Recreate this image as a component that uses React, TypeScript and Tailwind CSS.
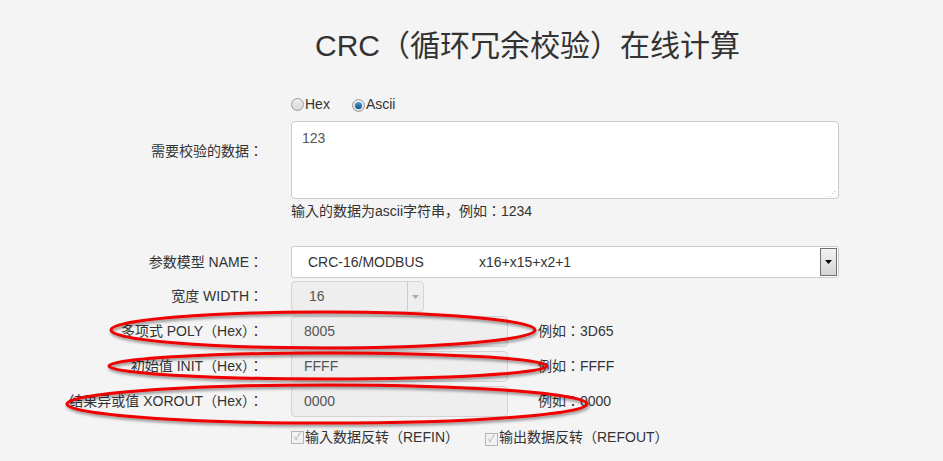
import React from 'react';

const font = { fontFamily: '"Liberation Sans", Arial, "Noto Sans CJK KR", sans-serif' };

const Label = ({ children }: { children: React.ReactNode }) => (
  <div className="w-[266px] shrink-0 pr-[3px] text-right text-[14px] text-[#333]">{children}</div>
);

const Radio = ({ checked }: { checked?: boolean }) => (
  <span className="inline-flex h-[13px] w-[13px] items-center justify-center rounded-full border border-[#9a9a9a] bg-gradient-to-b from-[#eee] to-[#d8d8d8]">
    {checked && <span className="h-[7px] w-[7px] rounded-full bg-gradient-to-b from-[#4fa3e0] to-[#0a4f8c]" />}
  </span>
);

const Check = () => (
  <span className="inline-flex h-[13px] w-[13px] items-center justify-center border border-[#b5b5b5] bg-[#f2f2f2] text-[10px] leading-none text-[#aaa]">
    ✓
  </span>
);

const HexRow = ({ label, value, example }: { label: string; value: string; example: string }) => (
  <div className="flex h-[31px] items-center">
    <Label>{label}</Label>
    <div className="ml-[25px] flex h-[31px] w-[217px] items-center rounded-[4px] border border-[#d4d4d4] bg-[#eee] pl-[12px] text-[14px] text-[#555]">
      {value}
    </div>
    <div className="ml-[30px] text-[14px] text-[#333]">{example}</div>
  </div>
);

export default function App() {
  return (
    <div className="relative h-[461px] w-[943px] overflow-hidden bg-[#f4f4f4]" style={font}>
      <h1 className="pt-[26px] pl-[315px] text-[30px] leading-[40px] text-[#333]">CRC（循环冗余校验）在线计算</h1>

      <div className="mt-[28px] flex flex-col">
        <div className="flex h-[20px] items-center pl-[291px] text-[14px] leading-[20px] text-[#333]">
          <Radio />
          <span className="ml-[1px]">Hex</span>
          <span className="ml-[22px]"><Radio checked /></span>
          <span className="ml-[1px]">Ascii</span>
        </div>

        <div className="mt-[7px] flex">
          <Label>
            <div className="pt-[20px]">需要校验的数据：</div>
          </Label>
          <div className="relative ml-[25px] h-[78px] w-[548px] rounded-[4px] border border-[#ccc] bg-white px-[10px] pt-[6px] text-[14px] text-[#555]">
            123
            <span className="absolute right-[2px] bottom-[1px] text-[7px] leading-none text-[#aaa]">⋰</span>
          </div>
        </div>
        <div className="mt-[2px] h-[20px] pl-[291px] text-[14px] leading-[20px] text-[#333]">输入的数据为ascii字符串，例如：1234</div>

        <div className="mt-[25px] flex h-[32px] items-center">
          <Label>参数模型 NAME：</Label>
          <div className="ml-[25px] flex h-[32px] w-[548px] items-center rounded-[3px] border border-[#ccc] bg-white text-[14px] text-[#333]">
            <span className="pl-[16px]">CRC-16/MODBUS</span>
            <span className="ml-[55px] flex-1">x16+x15+x2+1</span>
            <span className="mr-[1px] flex h-[28px] w-[17px] items-center justify-center border border-[#707070] bg-gradient-to-b from-[#f2f2f2] to-[#d5d5d5]">
              <svg width="7" height="4" viewBox="0 0 7 4"><path d="M0 0h7L3.5 4z" fill="#000" /></svg>
            </span>
          </div>
        </div>

        <div className="mt-[3px] flex h-[31px] items-center">
          <Label>宽度 WIDTH：</Label>
          <div className="ml-[25px] flex h-[31px] w-[133px] items-center rounded-[4px] border border-[#d4d4d4] bg-[#eee] text-[14px] text-[#555]">
            <span className="flex-1 pl-[17px]">16</span>
            <span className="flex h-full w-[16px] items-center justify-center border-l border-[#ccc]">
              <svg width="7" height="4" viewBox="0 0 7 4"><path d="M0 0h7L3.5 4z" fill="#aaa" /></svg>
            </span>
          </div>
        </div>

        <div className="mt-[4px] flex flex-col gap-[4px]">
          <HexRow label="多项式 POLY（Hex）：" value="8005" example="例如：3D65" />
          <HexRow label="初始值 INIT（Hex）：" value="FFFF" example="例如：FFFF" />
          <HexRow label="结果异或值 XOROUT（Hex）：" value="0000" example="例如：0000" />
        </div>

        <div className="mt-[10px] flex h-[20px] items-center pl-[291px] text-[14px] leading-[20px] text-[#333]">
          <Check />
          <span className="ml-[1px]">输入数据反转（REFIN）</span>
          <span className="ml-[26px]"><Check /></span>
          <span className="ml-[1px]">输出数据反转（REFOUT）</span>
        </div>
      </div>

      <svg className="pointer-events-none absolute top-0 left-0" width="943" height="461">
        <defs>
          <filter id="sh" x="-10%" y="-50%" width="120%" height="200%">
            <feDropShadow dx="1" dy="2" stdDeviation="1.5" floodColor="#000" floodOpacity="0.45" />
          </filter>
        </defs>
        <g fill="none" stroke="#ee0000" strokeWidth="3" filter="url(#sh)">
          <ellipse cx="323" cy="330" rx="212" ry="18" />
          <ellipse cx="328" cy="366" rx="219" ry="13" />
          <ellipse cx="327" cy="404" rx="260" ry="19" />
        </g>
      </svg>
    </div>
  );
}
